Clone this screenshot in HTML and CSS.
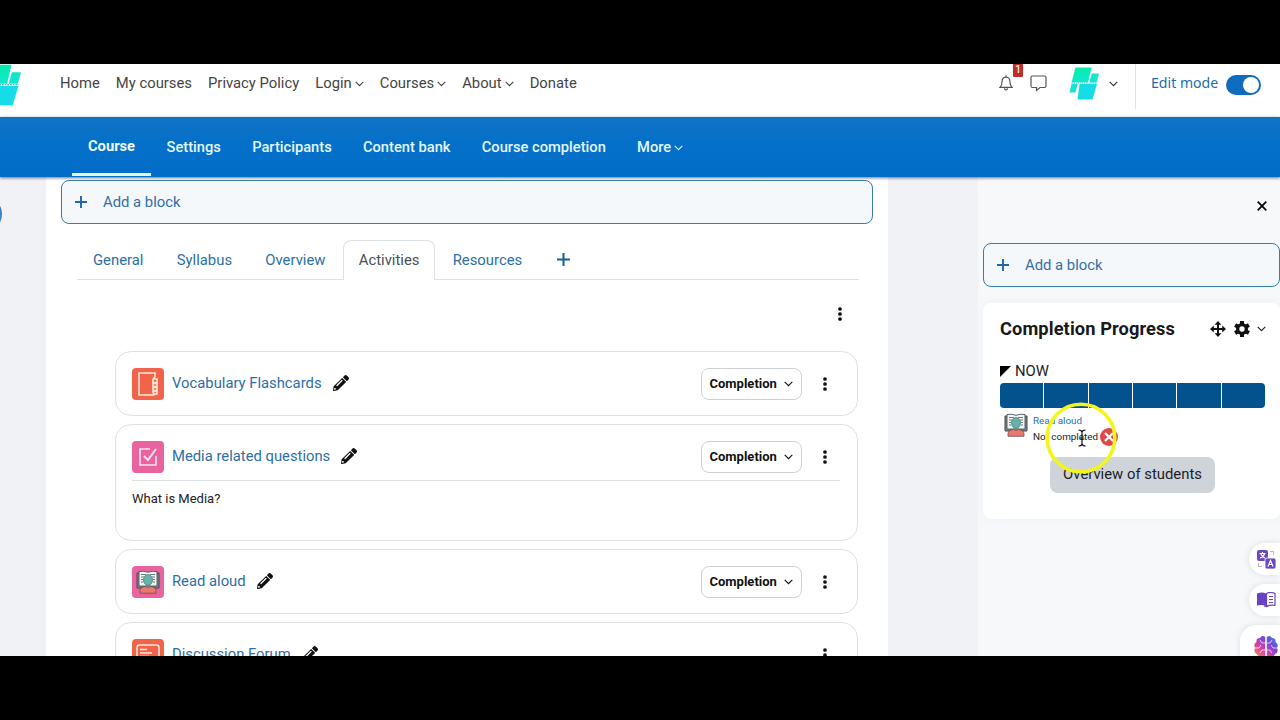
FILE: index.html
```html
<!DOCTYPE html>
<html lang="en">
<head>
<meta charset="utf-8">
<title>Course: Activities</title>
<link rel="stylesheet" href="styles.css">
</head>
<body>
<svg class="defs" width="0" height="0">
  <linearGradient id="lg" x1="0" y1="0" x2="0" y2="1"><stop stop-color="#05ecac"/><stop offset="1" stop-color="#12e8cf"/></linearGradient>
  <symbol id="chev" viewBox="0 0 9 6"><path d="M.7 .8l3.800 3.900L8.300 .8" fill="none" stroke="currentColor" stroke-width="1.100"/></symbol>
  <symbol id="plus" viewBox="0 0 12 12"><path d="M6 0v12M0 6h12" stroke="currentColor" stroke-width="1.900"/></symbol>
  <symbol id="dots" viewBox="0 0 4 14"><circle cx="2" cy="2" r="1.85"/><circle cx="2" cy="7" r="1.85"/><circle cx="2" cy="12" r="1.85"/></symbol>
  <symbol id="pen" viewBox="0 0 512 512"><path d="M498 142l-47 46c-5 5-12 5-17 0L324 78c-5-5-5-12 0-17l46-47c19-19 50-19 68 0l60 60c19 18 19 49 0 68zM284 100L22 362 0 484c-3 17 12 31 28 28l122-21 262-263c5-4 5-12 0-17L302 100c-5-4-13-4-18 0z" fill="#111"/><path d="M128 336L286 178" stroke="#fff" stroke-width="40" stroke-linecap="round"/><path d="M88 424v36l-52 10-5-5 10-52h36z" fill="#fff"/></symbol>
  <symbol id="logo" viewBox="0 0 30 33">
    <path d="M6.500 .5h16l-3.500 15h-16.500z" fill="url(#lg)"/><path d="M22.800 6.500h7.200l-2.500 9h-7.200z" fill="#12e5cd"/><path d="M2.500 17h6.200l-2.200 8.500H.5z" fill="#16e3d3"/><path d="M10.500 17h17.500l-4.500 15.500h-15z" fill="#16dce8"/>
    <path d="M2.500 16.200h25.500" stroke="#58bcbb" stroke-dasharray="1.400 .7" stroke-width=".9"/>
  </symbol>
  <symbol id="reader" viewBox="0 0 24 24">
    <path d="M1 3h22v15H1z" fill="#7f8587" stroke="#424b50"/>
    <path d="M3 1.500q5-.8 9 .8 4-1.600 9-.8V16H3z" fill="#f1f6f3" stroke="#48545a" stroke-width=".9"/>
    <path d="M5 4.500h5M5 7h3M5 9.500h2M5 12h2M14 4.500h5M16 7h3M17 9.500h2M17 12h2" stroke="#59676a" stroke-width=".9"/>
    <path d="M10 13h4v5h-4z" fill="#5aa79e"/><ellipse cx="12" cy="10" rx="4.500" ry="5.400" fill="#66b1a8" stroke="#527d7c" stroke-width=".8"/>
    <path d="M4 23.300v-2.300q0-4 5.500-4.500 2.500 1.500 5 0 5.500.5 5.500 4.500v2.300z" fill="#e8796c" stroke="#744d55" stroke-width=".8"/>
  </symbol>
</svg>
<div class="screen">
  <header class="topbar">
    <svg class="brand"><use href="#logo"/></svg>
    <nav class="primary">
      <a>Home</a><a>My courses</a><a>Privacy Policy</a>
      <a>Login<svg class="chev"><use href="#chev"/></svg></a>
      <a>Courses<svg class="chev"><use href="#chev"/></svg></a>
      <a>About<svg class="chev"><use href="#chev"/></svg></a>
      <a>Donate</a>
    </nav>
    <div class="tools">
      <span class="bell"><svg width="14" height="16" viewBox="0 0 14 16" fill="none" stroke="#555" stroke-width="1.200"><path d="M7 .3v1.800M1 12.300h12c-1.500-1.500-2-2.500-2-5.300C11 4 9.500 2.100 7 2.100S3 4 3 7c0 2.800-.5 3.800-2 5.300zM5.500 13.200c0 2.300 3 2.300 3 0"/></svg><b class="badge">1</b></span>
      <svg class="chat" width="17" height="17" viewBox="0 0 17 17" fill="none" stroke="#555" stroke-width="1.200"><path d="M2.500 1h12q1.500 0 1.500 1.500v8.500q0 1.500-1.500 1.500H10L6.500 15.500v-3h-4Q1 12.500 1 11V2.500Q1 1 2.500 1z"/></svg>
      <svg class="avatar"><use href="#logo"/></svg>
      <svg class="chev"><use href="#chev"/></svg>
    </div>
    <div class="edit"><span>Edit mode</span><i class="switch"></i></div>
  </header>
  <nav class="coursebar">
    <a class="on">Course</a><a>Settings</a><a>Participants</a><a>Content bank</a><a>Course completion</a><a>More<svg class="chev"><use href="#chev"/></svg></a>
  </nav>
  <div class="page">
    <i class="index-toggle"></i>
    <main class="content">
      <div class="addblock"><svg><use href="#plus"/></svg>Add a block</div>
      <div class="tabs"><a>General</a><a>Syllabus</a><a>Overview</a><a class="cur">Activities</a><a>Resources</a><a class="add"><svg width="13" height="13"><use href="#plus"/></svg></a></div>
      <div class="section-menu"><svg class="dots"><use href="#dots"/></svg></div>
      <div class="list">
        <article class="card">
          <div class="row"><span class="ico orange"><svg width="20" height="24" viewBox="0 0 20 24" fill="none" stroke="#ffeade" stroke-width="1.500"><path d="M17 5V1H1v22h15.500M17 5l-2 2v14l1.500 2M15 7h4v3.500h-4M15 11.500h4v3h-4M15 15.500h4v3h-4M15 19.500h4V22h-3"/></svg></span><a>Vocabulary Flashcards</a><svg class="pen"><use href="#pen"/></svg><span class="btn">Completion<svg class="chev"><use href="#chev"/></svg></span><svg class="dots"><use href="#dots"/></svg></div>
        </article>
        <article class="card tall">
          <div class="row"><span class="ico pink"><svg width="20" height="20" viewBox="0 0 20 20" fill="none" stroke="#ffe3f2" stroke-width="1.600"><path d="M12 2H2v16h16V9"/><path d="M6 9l4 4 8-11" stroke-width="2"/></svg></span><a>Media related questions</a><svg class="pen"><use href="#pen"/></svg><span class="btn">Completion<svg class="chev"><use href="#chev"/></svg></span><svg class="dots"><use href="#dots"/></svg></div>
          <p>What is Media?</p>
        </article>
        <article class="card">
          <div class="row"><span class="ico pink"><svg width="24" height="24"><use href="#reader"/></svg></span><a>Read aloud</a><svg class="pen"><use href="#pen"/></svg><span class="btn">Completion<svg class="chev"><use href="#chev"/></svg></span><svg class="dots"><use href="#dots"/></svg></div>
        </article>
        <article class="card">
          <div class="row"><span class="ico orange"><svg width="24" height="24" viewBox="0 0 24 24" fill="none" stroke="#ffe9e2" stroke-width="1.500"><rect x="1" y="2" width="22" height="18" rx="2.500"/><path d="M4 6.500h7M4 10h12M4 13.500h9"/></svg></span><a>Discussion Forum</a><svg class="pen"><use href="#pen"/></svg><svg class="dots end"><use href="#dots"/></svg></div>
        </article>
      </div>
    </main>
    <aside class="drawer">
      <div class="close"><svg width="10" height="10" viewBox="0 0 10 10"><path d="M.7.700l8.600 8.600M9.300.700L.7 9.300" stroke="#000" stroke-width="1.700"/></svg></div>
      <div class="addblock"><svg><use href="#plus"/></svg>Add a block</div>
      <section class="block">
        <div class="head"><h2>Completion Progress</h2>
          <svg class="move" viewBox="0 0 16 16"><path d="M8 2v12M2 8h12" stroke="#111" stroke-width="2"/><path d="M8 0l3.400 3.800H4.600zM8 16l3.400-3.800H4.600zM0 8l3.800-3.400v6.800zM16 8l-3.800-3.400v6.800z" fill="#111"/></svg>
          <svg class="gear" viewBox="0 0 16 16"><g stroke="#111" stroke-width="4"><path d="M8 0v16M1.100 4l13.800 8M1.100 12l13.800-8"/></g><circle cx="8" cy="8" r="6" fill="#111"/><circle cx="8" cy="8" r="2.700" fill="#fff"/></svg>
          <svg class="chev"><use href="#chev"/></svg></div>
        <div class="now"><svg width="11" height="11" viewBox="0 0 11 11"><path d="M0 0h11L0 11z"/></svg>NOW</div>
        <div class="bar"><i></i><i></i><i></i><i></i><i></i><i></i></div>
        <div class="info"><svg width="24" height="24"><use href="#reader"/></svg><div><a>Read aloud</a><span>Not completed<svg class="no" viewBox="0 0 18 18"><circle cx="9" cy="9" r="9" fill="#e2474b"/><path d="M5 5l8 8M13 5l-8 8" stroke="#fff" stroke-width="2.300"/></svg></span></div></div>
        <span class="overview">Overview of students</span>
      </section>
    </aside>
    <div class="floaters">
      <span class="float"><svg width="19" height="19" viewBox="0 0 19 19"><rect x="0" y="0" width="11" height="11" rx="2" fill="#6c48c4"/><rect x="8" y="8" width="11" height="11" rx="2" fill="#6c48c4" stroke="#fff" stroke-width=".8"/><path d="M2.500 3.500h6M5.500 2v1.500M4 4q1 3 4 4M7.500 4q-1 3-4.500 4M11 16.500l2.500-6 2.500 6M12 14.500h3" fill="none" stroke="#fff" stroke-width="1.200"/><path d="M13 1.500h3.500V5M1.500 13v3.500H5" fill="none" stroke="#beb7d1" stroke-width="1.200"/></svg></span>
      <span class="float"><svg width="19" height="16" viewBox="0 0 19 16"><path d="M0 1.500Q5-.5 9 1.500V14Q5 12.500 0 13.500z" fill="#6843c4"/><path d="M9.500 1.500q4-2 8.500 0v12q-5-1-8.500 1z" fill="#fff" stroke="#6843c4" stroke-width="1.200"/><path d="M12 4.500h4M12 7.500h4M12 10.500h4M7 14.300h4" stroke="#6843c4"/></svg></span>
      <span class="float big"><svg width="24" height="24" viewBox="0 0 24 24"><defs><linearGradient id="br" x1="0" y1="1" x2="1" y2="0"><stop stop-color="#ff953c"/><stop offset=".35" stop-color="#dc439f"/><stop offset=".65" stop-color="#7547dc"/><stop offset="1" stop-color="#398cf0"/></linearGradient></defs><path d="M11.200 2Q8-.5 6 3 2 3 2.500 7-1 9 1 13-1 17 3 19q2 5 8.200 3zM12.800 2Q16-.5 18 3q4 0 3.500 4 3.500 2 1.500 6 2 4-2 6-2 5-8.200 3z" fill="url(#br)"/><path d="M11 8H8L6 5M1 13h4l2-3M11 15H8l-2 3M13 8h3l2-3M23 13h-4l-2-3M13 15h3l2 3" stroke="#ffe7fa" fill="none" stroke-width=".8"/></svg></span>
    </div>
    <svg class="pointer" width="74" height="74" viewBox="0 0 74 74"><circle cx="37" cy="37" r="33.800" fill="none" stroke="#f3f51b" stroke-width="3.600"/><path d="M34.500 29q3 0 3.500 2 .5-2 3.500-2M38 31v12M34.500 45q3 0 3.500-2 .5 2 3.500 2M35.500 38h5" fill="none" stroke="#111" stroke-width="1.200"/></svg>
  </div>
</div>
</body>
</html>
```

FILE: styles.css
```css
* { box-sizing: border-box; }
body { margin: 0; background: #000; font: 14.850px/20px Roboto, sans-serif; color: #1d2125; padding: 64px 0; height: 720px; overflow: hidden; }
.defs { position: absolute; }
svg { flex: none; display: block; }
.screen { height: 592px; overflow: hidden; display: flex; flex-direction: column; background: #f1f2f6; }
.chev { width: 9px; height: 6px; }
.dots { width: 4px; height: 14px; }

.topbar { height: 53px; flex: none; background: #fff; display: flex; position: relative; }
.brand { width: 38px; height: 42px; margin-left: -17px; margin-right: 39px; }
.primary { display: flex; gap: 16px; padding-top: 9px; color: #444; font-size: 14.820px; white-space: nowrap; }
.primary a { display: flex; height: 20px; }
.primary .chev { margin: 8px 0 0 3px; }
.tools { margin-left: auto; display: flex; color: #333; }
.bell { position: relative; margin: 11px 17px 0 0; }
.badge { position: absolute; left: 14px; top: -12px; width: 10px; height: 14px; background: #c02e2a; color: #fff; font-size: 11px; line-height: 14px; font-weight: 400; text-align: center; border-radius: 1px; }
.chat { margin-top: 11px; }
.avatar { width: 30px; height: 33px; margin: 3px 10px 0 22px; }
.tools .chev { margin: 17px 17px 0 0; }
.edit { border-left: 1px solid #dee2e6; width: 145px; height: 45px; padding: 9px 0 0 15px; display: flex; color: #1e6cae; font-family: "Noto Sans", sans-serif; font-size: 14.100px; }
.edit span { width: 75px; white-space: nowrap; }
.switch { width: 35px; height: 20px; border-radius: 10px; background: #0f6cbf; padding: 2px 1px 2px 17px; margin-top: 2px; }
.switch::before { content: ""; display: block; width: 16px; height: 16px; border-radius: 50%; background: #fff; }

.coursebar { height: 60px; flex: none; background: linear-gradient(#1173c6, #0470c9 45%, #026dc8); padding-left: 72px; display: flex; color: #e3f7ff; font-weight: 500; font-size: 14.700px; box-shadow: 0 1px 3px rgba(0,0,0,.55); position: relative; z-index: 1; white-space: nowrap; }
.coursebar a { padding: 20px 15.600px 0; display: flex; }
.coursebar .on { font-weight: 700; color: #f2fcff; border-bottom: 3px solid #e9f6fb; padding: 19px 16px 0; height: 59px; }
.coursebar .chev { margin: 8px 0 0 3px; }

.page { flex: 1; min-height: 0; position: relative; display: flex; }
.index-toggle { position: absolute; left: -34px; top: 19px; width: 36px; height: 36px; border-radius: 50%; background: #3b82c0; }
.content { margin-left: 46px; width: 842px; background: #fff; padding: 3px 15px 0; flex: none; overflow: hidden; }
.addblock { height: 44px; border: 1px solid #387da6; border-radius: 8px; background: #f4f8fb; color: #356fa5; display: flex; align-items: center; padding-left: 13px; }
.addblock svg { width: 12px; height: 12px; margin-right: 16px; color: #1f67a5; }
.tabs { margin: 16px 14px 0 16px; height: 40px; border-bottom: 1px solid #dee2e6; display: flex; color: #2d6fa5; }
.tabs a { padding: 9px 15px 0; border: 1px solid transparent; border-bottom: 0; height: 40px; margin-right: 1.250px; }
.tabs .cur { background: #fff; color: #495057; border-color: #dee2e6; border-radius: 8px 8px 0 0; }
.tabs .add { padding: 12px 17px 0; color: #14609f; }
.section-menu { padding: 27px 31px 0 0; display: flex; justify-content: flex-end; }
.list { display: flex; flex-direction: column; gap: 8px; margin: 30px 15px 0 54px; }
.card { height: 65px; flex: none; border: 1px solid #dee2e6; border-radius: 16px; padding: 16px 17px 0 16px; }
.card.tall { height: 117px; }
.row { display: flex; align-items: center; height: 32px; color: #2c6ea6; }
.row a { padding-bottom: 2px; font-size: 14.800px; }
.row .dots { margin: 0 13px 0 21px; fill: #111; }
.row .end { margin-left: auto; }
.ico { width: 32px; height: 32px; border-radius: 4px; display: flex; align-items: center; justify-content: center; margin-right: 8px; }
.orange { background: #f2644a; }
.pink { background: #e9649f; }
.pen { width: 16px; height: 16px; margin: 0 0 2px 11px; }
.btn { margin-left: auto; width: 101px; height: 32px; border: 1px solid #ced2d6; border-radius: 8px; display: flex; align-items: center; color: #111; font-weight: 700; font-size: 13px; padding-left: 7.500px; }
.btn .chev { margin-left: auto; margin-right: 8px; }
.card p { margin: 7px 0 0; border-top: 1px solid #dee2e6; padding-top: 8px; font-size: 13px; color: #222; }

.drawer { margin-left: 90px; width: 302px; background: #f7f8fa; padding-left: 5px; position: relative; flex: none; }
.close { height: 66px; display: flex; justify-content: flex-end; padding: 24px 13px 0 0; }
.block { height: 216px; margin-top: 16px; background: #fff; border-radius: 8px; padding: 15px 15px 0 17px; box-shadow: 0 0 8px #eef0f2; }
.head { display: flex; align-items: center; height: 22px; margin-right: -1px; }
.head h2 { margin: 0; font-size: 18.250px; font-weight: 700; color: #17191c; white-space: nowrap; letter-spacing: .1px; }
.move { width: 16px; height: 16px; margin-left: auto; }
.gear { width: 16px; height: 16px; margin: 0 7px 0 8px; }
.now { display: flex; align-items: center; gap: 4px; height: 20px; margin-top: 21px; }
.bar { display: grid; grid-template-columns: repeat(6, 1fr); gap: 1px; height: 25px; margin-top: 2px; border-radius: 4px; overflow: hidden; }
.bar i { background: #03528d; }
.info { display: flex; padding: 5px 0 0 4px; gap: 5px; font-size: 9.900px; line-height: 16px; height: 49px; white-space: nowrap; }
.info a { display: block; height: 15px; color: #2d6fa5; }
.info span { display: flex; align-items: center; color: #222; }
.no { width: 18px; height: 18px; margin-left: 2px; }
.overview { display: block; width: 165px; height: 36px; margin-left: 50px; border-radius: 8px; background: #ced4da; text-align: center; line-height: 35px; white-space: nowrap; }

.floaters { position: absolute; right: 0; top: 366px; width: 40px; display: flex; flex-direction: column; align-items: flex-end; gap: 9px; }
.float { width: 31px; height: 32px; background: #fff; border-radius: 16px 0 0 16px; display: flex; align-items: center; padding-left: 8px; box-shadow: 0 0 6px rgba(50,50,60,.13); }
.big { width: 40px; height: 48px; padding: 0 0 5px 14px; }
.pointer { position: absolute; left: 1044px; top: 224px; }
```
